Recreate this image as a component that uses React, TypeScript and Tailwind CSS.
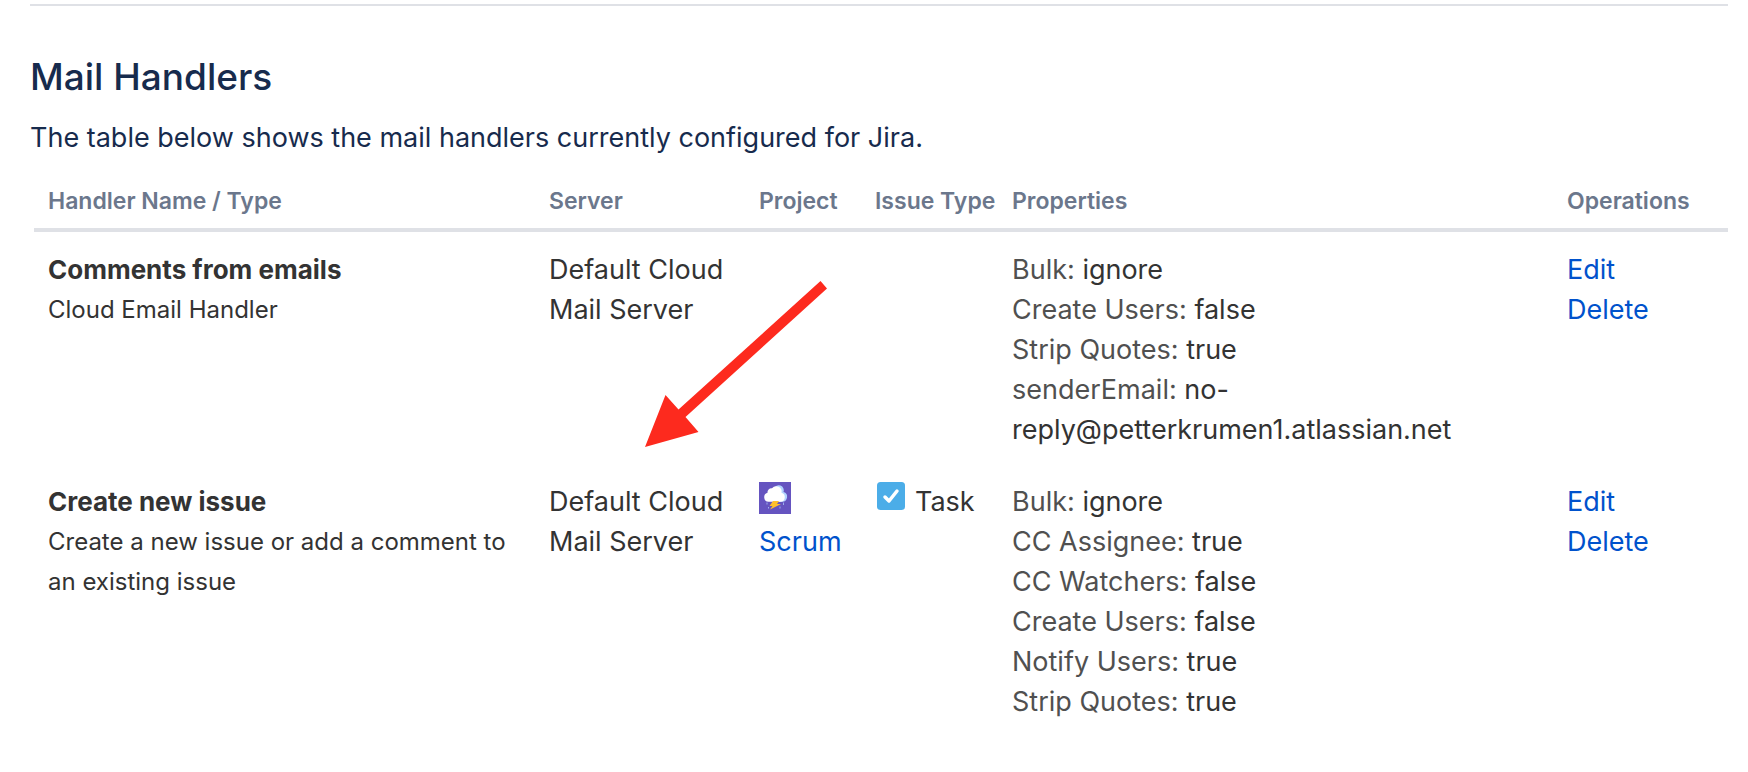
type Property = { label: string; value: string };

type Handler = {
  id: string;
  name: string;
  type: string;
  server: string;
  project?: string;
  issueType?: string;
  properties: Property[];
};

const handlers: Handler[] = [
  {
    id: "1",
    name: "Comments from emails",
    type: "Cloud Email Handler",
    server: "Default Cloud Mail Server",
    properties: [
      { label: "Bulk", value: "ignore" },
      { label: "Create Users", value: "false" },
      { label: "Strip Quotes", value: "true" },
      { label: "senderEmail", value: "no-reply@petterkrumen1.atlassian.net" },
    ],
  },
  {
    id: "2",
    name: "Create new issue",
    type: "Create a new issue or add a comment to an existing issue",
    server: "Default Cloud Mail Server",
    project: "Scrum",
    issueType: "Task",
    properties: [
      { label: "Bulk", value: "ignore" },
      { label: "CC Assignee", value: "true" },
      { label: "CC Watchers", value: "false" },
      { label: "Create Users", value: "false" },
      { label: "Notify Users", value: "true" },
      { label: "Strip Quotes", value: "true" },
    ],
  },
];

function ProjectAvatar() {
  return (
    <svg viewBox="0 0 32 32" className="block h-8 w-8" aria-hidden="true">
      <rect width="32" height="32" fill="#6554C0" />
      <path
        d="M15 6.500a5 5 0 0 1 9.500 3.500a5 5 0 0 1-1.500 9.800H16z"
        fill="#B3D4FF"
      />
      <path
        d="M9.500 19.800a4.600 4.600 0 0 1-1-9a4 4 0 0 1 4.500-4.500a5.400 5.400 0 0 1 9.500 4.500a4.600 4.600 0 0 1-1 9z"
        fill="#FFFFFF"
      />
      <path d="M14 19h6l-2 3h4L11 27.500l2.500-3.500h-3z" fill="#FFC02B" />
      <path
        d="M8 20.500v2M9.500 25v1.500M24.500 20.500v2.500M21 24.500v2"
        stroke="#B3D4FF"
        strokeOpacity=".7"
      />
    </svg>
  );
}

function TaskIcon() {
  return (
    <svg
      viewBox="0 0 28 28"
      className="block h-7 w-7 shrink-0"
      aria-hidden="true"
    >
      <rect width="28" height="28" rx="3.500" fill="#4BADE8" />
      <path
        d="M8 15l4 4L20 9"
        fill="none"
        stroke="#FFFFFF"
        strokeWidth="3.500"
        strokeLinecap="round"
        strokeLinejoin="round"
      />
    </svg>
  );
}

function Arrow() {
  return (
    <svg
      viewBox="0 0 182 166"
      className="pointer-events-none absolute top-[281px] left-[645px] h-[166px] w-[182px]"
      aria-hidden="true"
    >
      <path
        d="M0 166L20.500 114L33.500 128.500L175.500 0L182 7.500L40.500 136L53.500 151z"
        fill="#FD2A1E"
      />
    </svg>
  );
}

export default function MailHandlersPage() {
  return (
    <main className="relative min-h-screen bg-white pt-1 pr-5 pb-6 pl-[30px] font-[Inter,sans-serif] text-[27px] leading-10 text-[#333333]">
      <hr className="border-t-2 border-[#DFE1E6]" />

      <h1 className="mt-[46px] text-[37px] leading-[50px] font-medium text-[#172B4D]">
        Mail Handlers
      </h1>
      <p className="mt-4 text-[#172B4D]">
        The table below shows the mail handlers currently configured for Jira.
      </p>

      <div className="mt-6 pl-1">
        <table className="w-full table-fixed border-collapse text-left">
          <colgroup>
            <col className="w-[501px]" />
            <col className="w-[210px]" />
            <col className="w-[116px]" />
            <col className="w-[137px]" />
            <col />
            <col className="w-[175px]" />
          </colgroup>
          <thead>
            <tr className="border-b-4 border-[#DFE1E6] text-[23px] leading-[38px] text-[#6B778C] [&>th]:pb-2 [&>th]:pl-[14px] [&>th]:font-semibold [&>th]:whitespace-nowrap">
              <th scope="col">Handler Name / Type</th>
              <th scope="col">Server</th>
              <th scope="col">Project</th>
              <th scope="col">Issue Type</th>
              <th scope="col">Properties</th>
              <th scope="col">Operations</th>
            </tr>
          </thead>
          <tbody>
            {handlers.map((handler) => (
              <tr
                key={handler.id}
                className="[&>td]:pt-[18px] [&>td]:pb-[14px] [&>td]:pl-[14px] [&>td]:align-top"
              >
                <td>
                  <strong className="block text-[26px] leading-10 font-bold">
                    {handler.name}
                  </strong>
                  <span className="block pr-4 text-2xl leading-10">
                    {handler.type}
                  </span>
                </td>
                <td>{handler.server}</td>
                <td>
                  {handler.project && (
                    <>
                      <div className="h-10">
                        <ProjectAvatar />
                      </div>
                      <a href="#" className="text-[#0052CC] hover:underline">
                        {handler.project}
                      </a>
                    </>
                  )}
                </td>
                <td>
                  {handler.issueType && (
                    <div className="flex items-start gap-[10px] pl-[2px]">
                      <TaskIcon />
                      {handler.issueType}
                    </div>
                  )}
                </td>
                <td>
                  <ul>
                    {handler.properties.map((property) => (
                      <li key={property.label}>
                        <span className="text-[#505050]">
                          {property.label}:
                        </span>{" "}
                        {property.value}
                      </li>
                    ))}
                  </ul>
                </td>
                <td>
                  <ul className="text-[#0052CC]">
                    <li>
                      <a href="#" className="hover:underline">
                        Edit
                      </a>
                    </li>
                    <li>
                      <a href="#" className="hover:underline">
                        Delete
                      </a>
                    </li>
                  </ul>
                </td>
              </tr>
            ))}
          </tbody>
        </table>
      </div>

      {/* Points at the mail server of the second handler */}
      <Arrow />
    </main>
  );
}
